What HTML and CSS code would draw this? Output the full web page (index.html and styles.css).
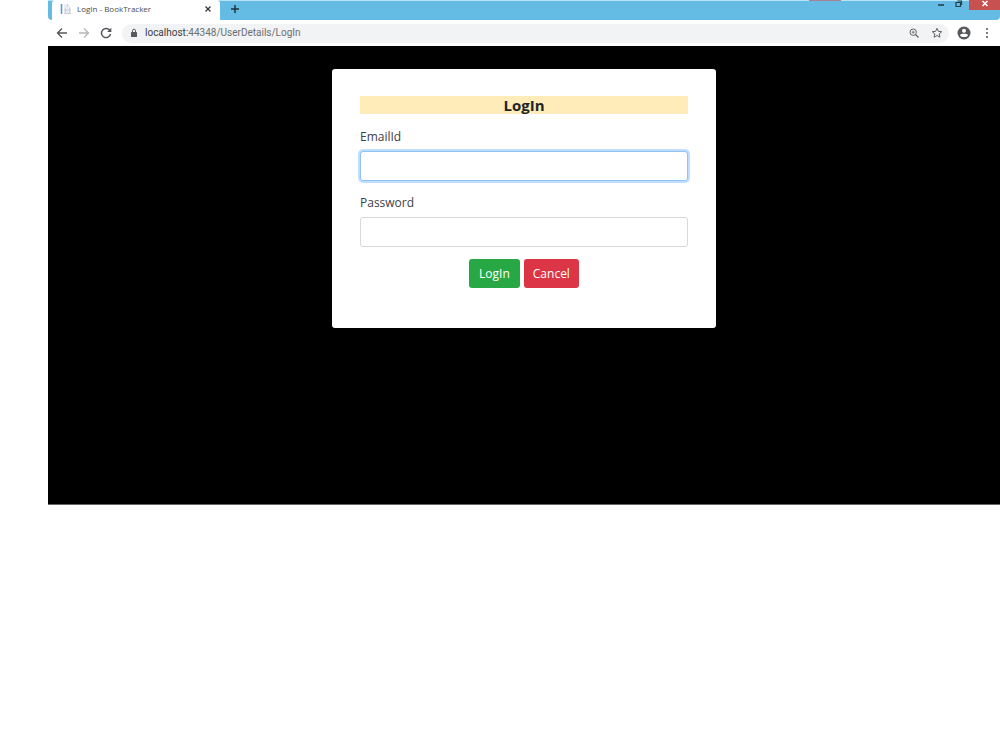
FILE: index.html
```html
<!DOCTYPE html>
<html lang="en">
<head>
<meta charset="utf-8">
<title>LogIn - BookTracker</title>
<link rel="stylesheet" href="styles.css">
</head>
<body>
<div class="window">
  <header class="tabstrip">
    <div class="tab">
      <svg class="favicon" viewBox="0 0 12 12" width="12" height="12" aria-hidden="true"><path d="M1.500 1v10" stroke="#5b9fc4" stroke-width="1.600"/><path d="M4 1h4l3 3v7H4z" fill="#eceff1"/><path d="M7.500 1v3M4 7h7M5.500 5v5M9.500 5v5M4 10.500h7" stroke="#cdd2d6" fill="none"/></svg>
      <span class="tab-title">LogIn - BookTracker</span>
      <button class="icon tab-close" aria-label="Close tab"><svg viewBox="0 0 8 8" width="8" height="8"><path d="M1.500 1.500l5 5M6.500 1.500l-5 5" stroke="#333" stroke-width="1.200"/></svg></button>
    </div>
    <button class="icon new-tab" aria-label="New tab"><svg viewBox="0 0 10 10" width="10" height="10"><path d="M5 1v8M1 5h8" stroke="#20333d" stroke-width="1.500"/></svg></button>
    <span class="top-mark"></span>
    <div class="window-controls">
      <button class="icon minimize" aria-label="Minimize"><svg viewBox="0 0 8 10" width="8" height="10"><path d="M1 5h6" stroke="#22404f" stroke-width="1.600"/></svg></button>
      <button class="icon restore" aria-label="Restore"><svg viewBox="0 0 10 10" width="10" height="10"><path d="M2 2.500h4.500v4H2zM3.500 1h4v4" fill="none" stroke="#22404f" stroke-width="1.200"/></svg></button>
      <button class="icon close" aria-label="Close"><svg viewBox="0 0 8 10" width="8" height="10"><path d="M1.500 1l5 5M6.500 1l-5 5" stroke="#fff" stroke-width="1.500"/></svg></button>
    </div>
  </header>
  <nav class="toolbar" aria-label="Browser">
    <button class="icon nav" aria-label="Back"><svg viewBox="0 0 12 12" width="12" height="12"><path d="M11 6H2M6 1.500L1.500 6 6 10.500" fill="none" stroke="#55595e" stroke-width="1.400"/></svg></button>
    <button class="icon nav" aria-label="Forward"><svg viewBox="0 0 12 12" width="12" height="12"><path d="M1 6h9M6 1.500L10.500 6 6 10.500" fill="none" stroke="#b4b7ba" stroke-width="1.300"/></svg></button>
    <button class="icon nav" aria-label="Reload"><svg viewBox="0 0 12 12" width="12" height="12"><path d="M10 3.600A4.600 4.600 0 1 0 10.600 7" fill="none" stroke="#505458" stroke-width="1.400"/><path d="M11.300 .8v4.200H7.100z" fill="#505458"/></svg></button>
    <div class="omnibox">
      <svg class="lock" viewBox="0 0 8 10" width="8" height="10" aria-hidden="true"><rect x="1" y="4" width="6" height="5" rx=".6" fill="#55595e"/><path d="M2.500 4V2.700a1.500 1.500 0 0 1 3 0V4" fill="none" stroke="#55595e"/></svg>
      <span class="url"><span class="host">localhost:</span>44348/UserDetails/LogIn</span>
      <button class="icon" aria-label="Zoom"><svg viewBox="0 0 12 12" width="12" height="12"><circle cx="5.200" cy="5.200" r="3.200" fill="none" stroke="#5f6368"/><path d="M7.500 7.500L10.500 10.500" stroke="#5f6368" stroke-width="1.300"/><path d="M3.700 5.200h3M5.200 3.700v3" stroke="#5f6368" stroke-width=".8"/></svg></button>
      <button class="icon" aria-label="Bookmark"><svg viewBox="0 0 12 12" width="12" height="12"><path d="M6 1.300l1.400 3.100 3.400.3-2.600 2.200.8 3.300L6 8.500l-3 1.700.8-3.300-2.600-2.200 3.400-.3z" fill="none" stroke="#5f6368"/></svg></button>
    </div>
    <button class="icon profile" aria-label="Profile"><svg viewBox="0 0 14 14" width="14" height="14"><circle cx="7" cy="7" r="6.500" fill="#55575b"/><circle cx="7" cy="4.800" r="2" fill="#fff"/><path d="M3 9.400c.3-1.200 2.200-1.600 4-1.600s3.700.4 4 1.600c-1 1.200-2.400 1.700-4 1.700s-3-.5-4-1.700z" fill="#fff"/></svg></button>
    <button class="icon menu" aria-label="Menu"><svg viewBox="0 0 4 12" width="4" height="12"><g fill="#505458"><circle cx="2" cy="2" r="1"/><circle cx="2" cy="6" r="1"/><circle cx="2" cy="10" r="1"/></g></svg></button>
  </nav>
  <main class="page">
    <form class="card">
      <h1 class="heading">LogIn</h1>
      <div class="field">
        <label for="email">EmailId</label>
        <input class="focused" id="email" type="text">
      </div>
      <div class="field">
        <label for="password">Password</label>
        <input id="password" type="password">
      </div>
      <div class="actions">
        <button class="btn success" type="button">LogIn</button>
        <button class="btn danger" type="button">Cancel</button>
      </div>
    </form>
  </main>
</div>
</body>
</html>
```
FILE: styles.css
```css
* { box-sizing: border-box; }
body {
  margin: 0;
  background: #fff;
  color: #212529;
  font-family: "Open Sans", "Noto Sans", sans-serif;
}
.window { margin-left: 48px; }
.icon {
  display: flex;
  align-items: center;
  justify-content: center;
  padding: 0;
  border: 0;
  background: none;
}
.icon svg, .favicon, .lock { display: block; flex: none; }

.tabstrip {
  display: flex;
  height: 20px;
  padding-left: 4px;
  background: #64bbe3;
  border-top: 1px solid #b5e2f5;
  border-radius: 0 0 4px 4px;
}
.tab {
  display: flex;
  align-items: center;
  width: 168px;
  padding: 0 8px;
  margin-top: -1px;
  background: #fff;
  border-radius: 4px 4px 0 0;
}
.favicon { margin-bottom: 2px; }
.tab-title {
  flex: 1;
  margin: 0 0 3px 5px;
  font-size: 8px;
  line-height: 12px;
  color: #4a4d51;
}
.tab-close { margin-bottom: 2px; }
.new-tab { width: 30px; height: 15px; }
.top-mark {
  width: 32px;
  height: 1px;
  margin: -1px 91px 0 auto;
  background: #a98294;
}
.window-controls { display: flex; margin-top: -1px; }
.window-controls .icon { height: 10px; }
.minimize { width: 17px; }
.restore { width: 20px; }
.window-controls .close { width: 31px; background: #c75050; }

.toolbar {
  display: flex;
  align-items: center;
  height: 26px;
  padding: 0 8px 0 6px;
  background: #fff;
}
.nav { width: 16px; height: 18px; margin-right: 6px; }
.omnibox {
  display: flex;
  flex: 1;
  align-items: center;
  height: 19px;
  margin-left: 2px;
  padding: 0 6px 0 8px;
  gap: 11px;
  border-radius: 10px;
  background: #f1f3f4;
}
.url {
  flex: 1;
  margin-left: -4px;
  font-family: Roboto, "Open Sans", sans-serif;
  font-size: 10px;
  line-height: 14px;
  color: #6b6f73;
}
.host { color: #3c4043; }
.profile { margin-left: 8px; }
.menu { width: 10px; margin-left: 11px; }

.page {
  display: flex;
  align-items: flex-start;
  justify-content: center;
  min-height: 459px;
  padding: 23px 16px;
  background: #000;
  border-bottom: 1px solid #666;
}
.card {
  width: 384px;
  padding: 27px 28px 40px;
  background: #fff;
  border-radius: 3px;
}
.heading {
  margin: 0 0 13px;
  background: #ffecb9;
  text-align: center;
  font-size: 15px;
  font-weight: 700;
  line-height: 18px;
}
.field { margin-bottom: 12px; }
.field label {
  display: block;
  margin-bottom: 4px;
  font-size: 12px;
  line-height: 20px;
  color: #3d4145;
}
.field input {
  display: block;
  width: 100%;
  height: 30px;
  padding: 4px 9px;
  border: 1px solid #d5d9dd;
  border-radius: 3px;
  font: inherit;
  font-size: 12px;
  outline: none;
}
.field .focused {
  border-color: #8fc2f7;
  box-shadow: 0 0 0 2px #bfdeff;
}
.actions { display: flex; justify-content: center; gap: 4px; }
.btn {
  height: 29px;
  padding: 0 9px;
  border: 0;
  border-radius: 3px;
  color: #fff;
  font: inherit;
  font-size: 12px;
  line-height: 20px;
}
.success { padding: 0 10px; background: #28a745; }
.danger { background: #dc3545; }
```
